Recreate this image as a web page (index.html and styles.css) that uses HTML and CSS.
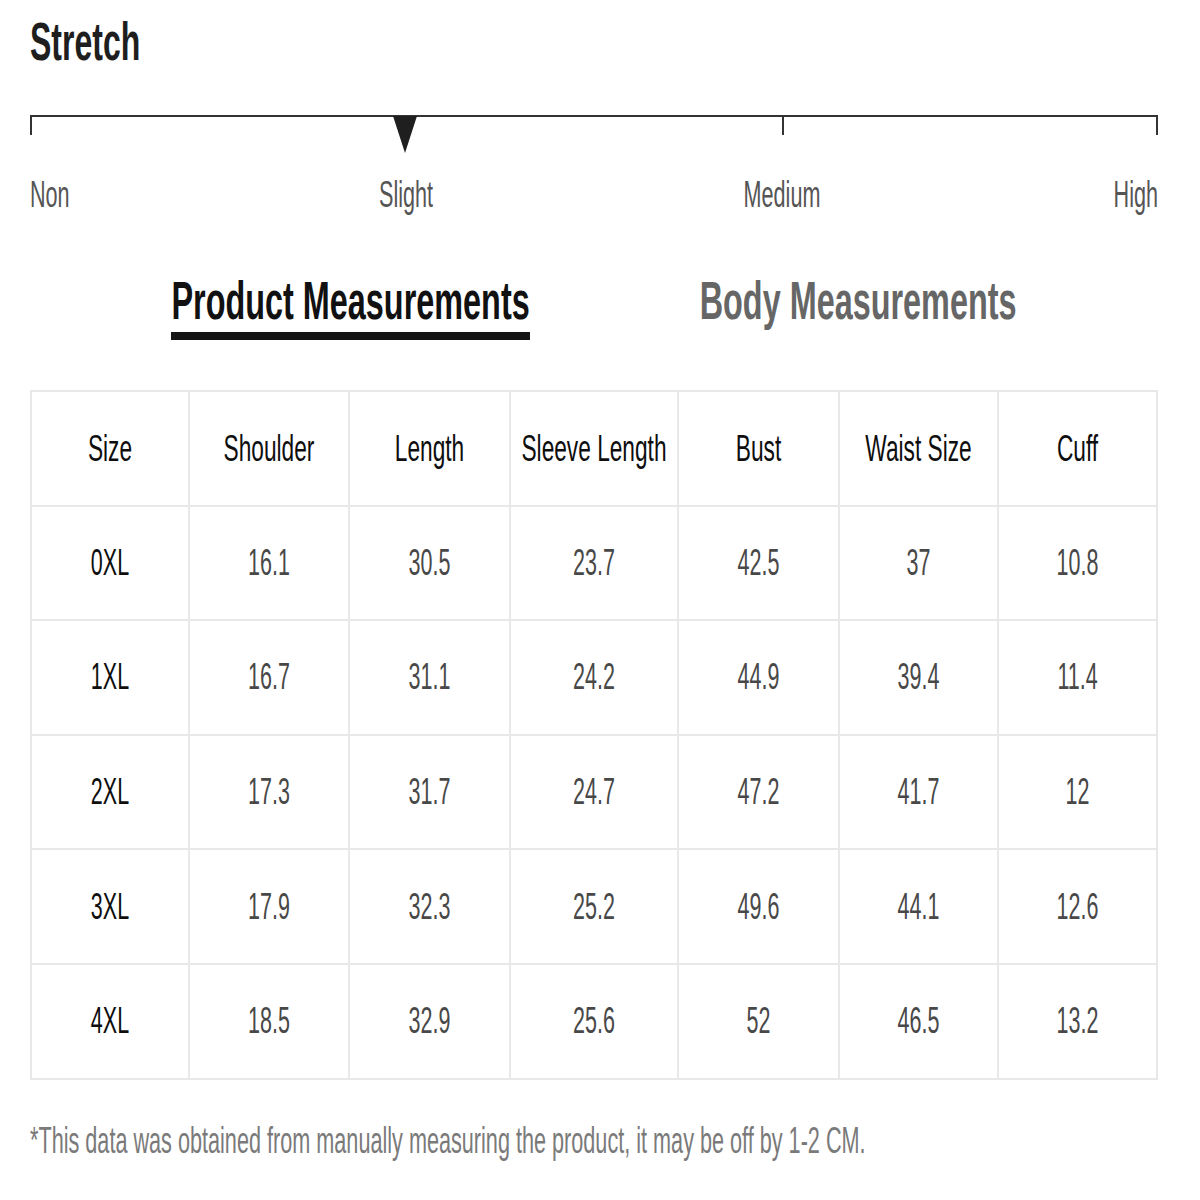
FILE: index.html
```html
<!DOCTYPE html>
<html lang="en">
<head>
<meta charset="utf-8">
<title>Size Chart</title>
<link rel="stylesheet" href="styles.css">
</head>
<body>
<div class="page">
  <h1 class="title"><span class="st">Stretch</span></h1>

  <div class="scale">
    <div class="seg"></div>
    <div class="seg"></div>
    <div class="seg last"></div>
    <div class="pointer"></div>
  </div>

  <div class="labels">
    <span class="lbl non"><span class="st">Non</span></span>
    <span class="lbl slight"><span class="st">Slight</span></span>
    <span class="lbl medium"><span class="st">Medium</span></span>
    <span class="lbl high"><span class="st">High</span></span>
  </div>

  <div class="tabs">
    <div class="tab active"><span class="st">Product Measurements</span></div>
    <div class="tab"><span class="st">Body Measurements</span></div>
  </div>

  <div class="grid">
    <div class="cell head"><span class="st">Size</span></div>
    <div class="cell head"><span class="st">Shoulder</span></div>
    <div class="cell head"><span class="st">Length</span></div>
    <div class="cell head"><span class="st">Sleeve Length</span></div>
    <div class="cell head"><span class="st">Bust</span></div>
    <div class="cell head"><span class="st">Waist Size</span></div>
    <div class="cell head"><span class="st">Cuff</span></div>

    <div class="cell size"><span class="st">0XL</span></div>
    <div class="cell"><span class="st">16.1</span></div>
    <div class="cell"><span class="st">30.5</span></div>
    <div class="cell"><span class="st">23.7</span></div>
    <div class="cell"><span class="st">42.5</span></div>
    <div class="cell"><span class="st">37</span></div>
    <div class="cell"><span class="st">10.8</span></div>

    <div class="cell size"><span class="st">1XL</span></div>
    <div class="cell"><span class="st">16.7</span></div>
    <div class="cell"><span class="st">31.1</span></div>
    <div class="cell"><span class="st">24.2</span></div>
    <div class="cell"><span class="st">44.9</span></div>
    <div class="cell"><span class="st">39.4</span></div>
    <div class="cell"><span class="st">11.4</span></div>

    <div class="cell size"><span class="st">2XL</span></div>
    <div class="cell"><span class="st">17.3</span></div>
    <div class="cell"><span class="st">31.7</span></div>
    <div class="cell"><span class="st">24.7</span></div>
    <div class="cell"><span class="st">47.2</span></div>
    <div class="cell"><span class="st">41.7</span></div>
    <div class="cell"><span class="st">12</span></div>

    <div class="cell size"><span class="st">3XL</span></div>
    <div class="cell"><span class="st">17.9</span></div>
    <div class="cell"><span class="st">32.3</span></div>
    <div class="cell"><span class="st">25.2</span></div>
    <div class="cell"><span class="st">49.6</span></div>
    <div class="cell"><span class="st">44.1</span></div>
    <div class="cell"><span class="st">12.6</span></div>

    <div class="cell size"><span class="st">4XL</span></div>
    <div class="cell"><span class="st">18.5</span></div>
    <div class="cell"><span class="st">32.9</span></div>
    <div class="cell"><span class="st">25.6</span></div>
    <div class="cell"><span class="st">52</span></div>
    <div class="cell"><span class="st">46.5</span></div>
    <div class="cell"><span class="st">13.2</span></div>
  </div>

  <p class="note"><span class="st">*This data was obtained from manually measuring the product, it may be off by 1-2 CM.</span></p>
</div>
</body>
</html>
```

FILE: styles.css
```css
* { box-sizing: border-box; }

html, body {
  margin: 0;
  padding: 0;
  background: #ffffff;
}

body {
  font-family: "Liberation Sans", Arial, sans-serif;
  color: #222;
}

.page {
  width: 1200px;
  padding: 14px 42px 0 30px;
}

.st {
  display: inline-block;
  transform: scaleY(1.7);
  transform-origin: center;
  white-space: nowrap;
}

.title {
  margin: 0;
  font-size: 32px;
  line-height: 54px;
  font-weight: bold;
  color: #1e1e1e;
}

/* stretch scale */
.scale {
  position: relative;
  margin-top: 47px;
  display: grid;
  grid-template-columns: repeat(3, 1fr);
  height: 20px;
  border-top: 2px solid #333;
}

.seg {
  border-left: 2px solid #333;
}

.seg.last {
  border-right: 2px solid #333;
}

.pointer {
  position: absolute;
  top: -1px;
  left: 363px;
  width: 0;
  height: 0;
  border-left: 12px solid transparent;
  border-right: 12px solid transparent;
  border-top: 37px solid #1f1f1f;
}

.labels {
  margin-top: 40px;
  display: grid;
  grid-template-columns: repeat(6, 1fr);
  font-size: 21.6px;
  line-height: 40px;
  color: #555;
}

.lbl.non { grid-column: 1; justify-self: start; }
.lbl.slight { grid-column: 2 / span 2; justify-self: center; }
.lbl.medium { grid-column: 4 / span 2; justify-self: center; }
.lbl.high { grid-column: 6; justify-self: end; }

/* tabs */
.tabs {
  margin-top: 59px;
  display: flex;
  justify-content: center;
  gap: 170px;
}

.tab {
  font-size: 32.4px;
  line-height: 54px;
  font-weight: bold;
  color: #666;
  padding-bottom: 4px;
  border-bottom: 8px solid transparent;
}

.tab .st {
  transform: scaleY(1.66);
}

.tab.active {
  color: #111;
  border-bottom-color: #151515;
}

/* table */
.grid {
  margin-top: 50px;
  display: grid;
  grid-template-columns: 158px 160px 161px 168px 161px 159px 159px;
  grid-template-rows: repeat(6, 114.6px);
  border-top: 2px solid #e8e8e8;
  border-left: 2px solid #e8e8e8;
  width: 1128px;
}

.cell {
  display: flex;
  align-items: center;
  justify-content: center;
  border-right: 2px solid #e8e8e8;
  border-bottom: 2px solid #e8e8e8;
  font-size: 21.5px;
  line-height: 30px;
  color: #484848;
}

.cell.head {
  font-size: 22.7px;
  color: #0e0e0e;
}

.cell.head .st {
  transform: scaleY(1.66);
}

.cell.size {
  color: #0e0e0e;
}

.note {
  margin: 41px 0 0;
  font-size: 21.65px;
  line-height: 40px;
  color: #7a7a7a;
}
```
